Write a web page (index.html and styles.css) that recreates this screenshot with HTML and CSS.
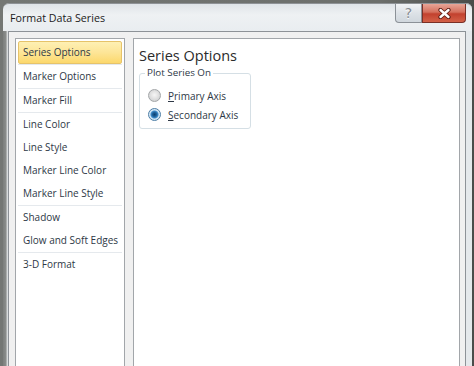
FILE: index.html
```html
<!DOCTYPE html>
<html lang="en">
<head>
	<meta charset="UTF-8">
	<title>Format Data Series</title>
	<link rel="stylesheet" href="styles.css">
</head>
<body>
	<div class="window">

		<div class="titlebar">
			<span class="title">Format Data Series</span>
			<div class="caption-buttons">
				<button class="help">?</button>
				<button class="close">
					<svg width="13" height="11" viewBox="0 0 13 11">
						<path d="M2.5 2 L10.5 9 M10.5 2 L2.5 9" stroke="#5a1a12" stroke-width="4.2" stroke-linecap="round"/>
						<path d="M2.5 2 L10.5 9 M10.5 2 L2.5 9" stroke="#fff" stroke-width="2.4" stroke-linecap="round"/>
					</svg>
				</button>
			</div>
		</div>

		<div class="client">
			<ul class="nav">
				<li class="selected">Series Options</li>
				<li class="sep"></li>
				<li>Marker Options</li>
				<li class="sep"></li>
				<li>Marker Fill</li>
				<li class="sep"></li>
				<li>Line Color</li>
				<li>Line Style</li>
				<li>Marker Line Color</li>
				<li>Marker Line Style</li>
				<li class="sep"></li>
				<li>Shadow</li>
				<li>Glow and Soft Edges</li>
				<li class="sep"></li>
				<li>3-D Format</li>
			</ul>

			<div class="pane">
				<h1>Series Options</h1>
				<fieldset class="group">
					<legend>Plot Series On</legend>
					<label class="radio"><span class="dot"></span><span><u>P</u>rimary Axis</span></label>
					<label class="radio checked"><span class="dot"></span><span><u>S</u>econdary Axis</span></label>
				</fieldset>
			</div>
		</div>

	</div>
</body>
</html>
```

FILE: styles.css
```css
* {
	box-sizing: border-box;
}

body {
	margin: 0;
	height: 366px;
	overflow: hidden;
	background: linear-gradient(to right, #747774 0, #6c6f6c 80%, #4a4c4a 100%);
	font-family: "Open Sans", "Noto Sans", sans-serif;
}

.window {
	margin: 3px 2px 0 3px;
	height: 400px;
	display: flex;
	flex-direction: column;
	border-radius: 6px 6px 0 0;
	background: linear-gradient(to right, #7c7f7d 0, #8a8d8b 3px, #cfd2d2 4px, #e4e8eb 5px, #e4e8eb 100%);
}

.titlebar {
	height: 28px;
	display: flex;
	align-items: center;
	padding: 0 6px 0 7px;
	border-top: 1px solid #8e9296;
	border-radius: 6px 6px 0 0;
	background: linear-gradient(#dfe4e8, #eef1f3 40%, #e9edf0);
}

.title {
	font-size: 10.7px;
	color: #1b1b1b;
	margin-top: 1px;
}

.caption-buttons {
	margin-left: auto;
	align-self: flex-start;
	display: flex;
}

.caption-buttons button {
	height: 19px;
	border: 1px solid #8b9197;
	border-top: 0;
	padding: 0;
	display: flex;
	align-items: center;
	justify-content: center;
}

.help {
	width: 27px;
	border-radius: 0 0 0 4px;
	background: linear-gradient(#f1f3f5, #dde2e7 50%, #d0d7dd);
	color: #868c92;
	font-family: "DejaVu Sans", sans-serif;
	font-size: 14px;
	text-shadow: 0 1px 0 #fff;
}

.close {
	width: 44px;
	border-radius: 0 0 4px 0;
	border-color: #7a3027 !important;
	background: linear-gradient(#e8a597, #d4705d 45%, #c2412e 55%, #d36148);
}

.client {
	flex: 1;
	display: flex;
	gap: 8px;
	margin: 0 6px 0 5px;
	padding: 6px 5px 0 6px;
	border: 1px solid #8d9297;
	border-bottom: 0;
	background: #f0f0f0;
}

.nav {
	width: 110px;
	margin: 0;
	padding: 2px 2px 0;
	list-style: none;
	background: #fff;
	border: 1px solid #a2a6aa;
}

.nav li {
	height: 23px;
	line-height: 22px;
	padding-left: 5px;
	font-size: 10px;
	color: #2e3846;
	white-space: nowrap;
}

.nav li.sep {
	height: 1px;
	background: #e5e9ed;
}

.nav li.selected {
	border: 1px solid #e6c36a;
	border-radius: 2px;
	padding-left: 4px;
	line-height: 20px;
	background: linear-gradient(#fef0b4, #fde597 50%, #fcd86c);
}

.pane {
	flex: 1;
	background: #fff;
	border: 1px solid #a2a6aa;
	padding: 0 0 0 5px;
}

.pane h1 {
	margin: 7px 0 0;
	font-size: 14.5px;
	line-height: 20px;
	font-weight: normal;
	color: #2b2b2b;
}

.group {
	width: 112px;
	margin: 0;
	padding: 6px 0 4px 5px;
	border: 1px solid #d5dfe5;
	border-radius: 3px;
}

.group legend {
	padding: 0 2px;
	font-size: 9.8px;
	line-height: 14px;
	color: #2e3846;
}

.radio {
	display: flex;
	align-items: center;
	gap: 7px;
	height: 19px;
	margin-left: 3px;
	font-size: 10px;
	color: #2e3846;
}

.dot {
	width: 13px;
	height: 13px;
	border-radius: 50%;
	border: 1px solid #a3a6a8;
	background: radial-gradient(circle at 50% 45%, #f6f6f6 0, #e2e2e2 45%, #c4c6c8 100%);
}

.radio.checked .dot {
	border-color: #4d7ea6;
	background: radial-gradient(circle, #0b3f6f 0, #1d5e98 2px, #3f8ccb 3.5px, #cfe4f4 4.5px, #e6f0f8 100%);
}
```
